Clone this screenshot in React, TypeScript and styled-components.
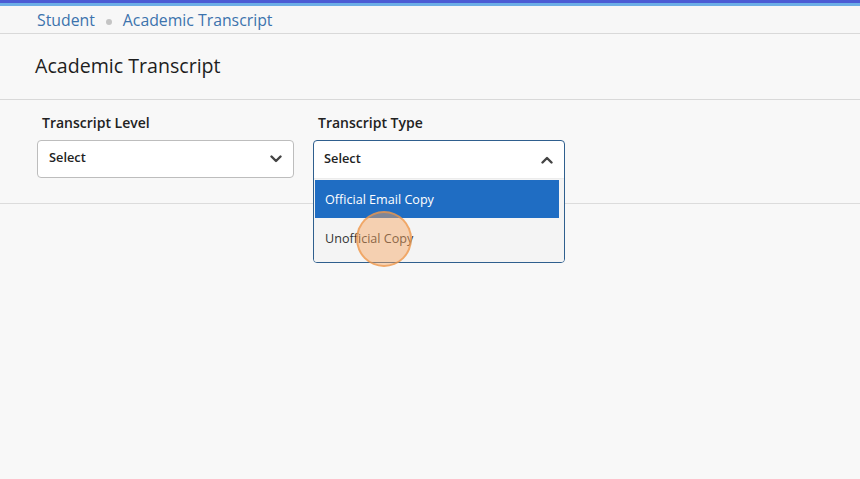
import React from 'react'
import styled, { createGlobalStyle } from 'styled-components'

const GlobalStyle = createGlobalStyle`
  html, body {
    margin: 0;
    padding: 0;
    background: #f8f8f8;
    font-family: "Open Sans", "Noto Sans", sans-serif;
  }
  * { box-sizing: border-box; }
`

type ChevronProps = { up?: boolean }

function Chevron({ up }: ChevronProps): React.ReactElement {
  return (
    <svg width="12" height="8" viewBox="0 0 12 8">
      <polyline
        points={up ? '1.5,6.5 6,2 10.5,6.5' : '1.5,1.5 6,6 10.5,1.5'}
        fill="none"
        stroke="#444"
        strokeWidth="2.4"
        strokeLinecap="round"
        strokeLinejoin="round"
      />
    </svg>
  )
}

export default function App(): React.ReactElement {
  return (
    <Page>
      <GlobalStyle />
      <TopStripe />
      <Breadcrumbs>
        <Crumb>Student</Crumb>
        <Dot />
        <Crumb>Academic Transcript</Crumb>
      </Breadcrumbs>
      <Header>
        <Title>Academic Transcript</Title>
      </Header>
      <Filters>
        <Field width={257}>
          <Label>Transcript Level</Label>
          <Control>
            <Value>Select</Value>
            <Chevron />
          </Control>
        </Field>
        <Field width={252}>
          <Label>Transcript Type</Label>
          <ControlSlot>
            <Popup>
              <PopupHead>
                <Value>Select</Value>
                <Chevron up />
              </PopupHead>
              <Options>
                <Option active>Official Email Copy</Option>
                <Option>Unofficial Copy</Option>
              </Options>
            </Popup>
            <ClickMark />
          </ControlSlot>
        </Field>
      </Filters>
    </Page>
  )
}

const Page = styled.div`
  min-height: 479px;
  background: #f8f8f8;
`
const TopStripe = styled.div`
  height: 6px;
  background: linear-gradient(to bottom, #4b5bd4 0, #4b5bd4 3px, #6caee6 3px, #6caee6 6px);
`
const Breadcrumbs = styled.nav`
  height: 28px;
  display: flex;
  align-items: center;
  gap: 11px;
  padding-left: 37px;
  border-bottom: 1px solid #d9d9d9;
  background: #f7f7f7;
`
const Crumb = styled.span`
  font-size: 15.8px;
  color: #3c73ad;
  line-height: 1;
  padding-top: 3px;
`
const Dot = styled.span`
  width: 6px;
  height: 6px;
  border-radius: 50%;
  background: #c4c4c4;
  margin-top: 4px;
`
const Header = styled.header`
  height: 66px;
  display: flex;
  align-items: center;
  padding-left: 35px;
  border-bottom: 1px solid #d9d9d9;
`
const Title = styled.h1`
  margin: 0;
  font-size: 19.6px;
  font-weight: 400;
  color: #1e1e1e;
  padding-bottom: 3px;
`
const Filters = styled.section`
  height: 104px;
  display: flex;
  gap: 19px;
  padding: 13px 0 0 37px;
  border-bottom: 1px solid #dcdcdc;
`
const Field = styled.div<{ width: number }>`
  width: ${({ width }) => width}px;
  display: flex;
  flex-direction: column;
  gap: 7px;
`
const Label = styled.label`
  font-size: 14px;
  font-weight: 600;
  color: #222;
  padding-left: 5px;
  line-height: 20px;
`
const Control = styled.div`
  height: 38px;
  display: flex;
  align-items: center;
  justify-content: space-between;
  padding: 0 11px 0 11px;
  background: #fff;
  border: 1px solid #bdbdbd;
  border-radius: 4px;
`
const ControlSlot = styled.div`
  position: relative;
  height: 38px;
`
const Popup = styled.div`
  position: absolute;
  top: 0;
  left: 0;
  right: 0;
  z-index: 2;
  background: #fff;
  border: 1px solid #2f5f8e;
  border-radius: 4px;
  overflow: hidden;
`
const PopupHead = styled.div`
  height: 37px;
  display: flex;
  align-items: center;
  justify-content: space-between;
  padding: 0 11px 0 10px;
`
const Value = styled.span`
  font-size: 12.8px;
  font-weight: 600;
  color: #222;
  margin-top: -4px;
`
const Options = styled.ul`
  list-style: none;
  margin: 0;
  padding: 1px 5px 5px 1px;
  background: #f4f4f4;
  border-top: 1px solid #ececec;
`
const Option = styled.li<{ active?: boolean }>`
  height: 38px;
  display: flex;
  align-items: center;
  padding: 0 10px;
  font-size: 12.6px;
  color: ${({ active }) => (active ? '#fff' : '#333')};
  background: ${({ active }) => (active ? '#1f6dc3' : 'transparent')};
  & + & { margin-top: 1px; }
`
const ClickMark = styled.span`
  position: absolute;
  left: 43px;
  top: 71px;
  width: 56px;
  height: 56px;
  border-radius: 50%;
  background: rgba(246, 164, 96, 0.45);
  border: 2px solid rgba(238, 150, 72, 0.7);
  z-index: 3;
  pointer-events: none;
`
